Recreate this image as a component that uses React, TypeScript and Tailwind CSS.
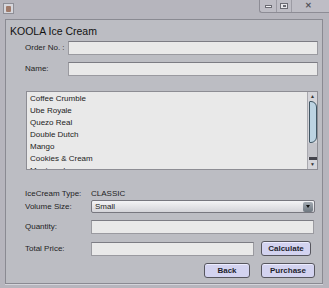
import React from 'react';

const flavors = [
  'Coffee Crumble',
  'Ube Royale',
  'Quezo Real',
  'Double Dutch',
  'Mango',
  'Cookies & Cream',
  'Mantecado',
];

const field = 'h-[14px] bg-[#e9e9e9] border border-[#9a9aa0] border-t-[#7c7c84]';
const btn =
  'h-[15px] rounded-[3px] border border-[#56565e] bg-[#d3d3f0] text-[8px] font-bold text-[#1e1e2e] flex items-center justify-center shadow-[inset_0_1px_0_#ececff]';

export default function App() {
  return (
    <div
      className="w-[329px] h-[288px] bg-[#b6b5bd] flex flex-col overflow-hidden"
      style={{ fontFamily: '"Liberation Sans", Arial, sans-serif' }}
    >
      {/* Title bar */}
      <div className="h-[19px] flex items-start justify-between shrink-0">
        <div className="ml-[3px] mt-[3px] w-[11px] h-[11px] border border-[#8e8e96] bg-[#d6d6dc] flex items-center justify-center">
          <div className="w-[5px] h-[6px] bg-[#a07a6a] rounded-[1px]" />
        </div>
        <div className="flex h-[13px] border-l border-b border-[#8d8c95] rounded-bl-[3px] bg-[#bebdc5]">
          <div className="w-[17px] flex items-center justify-center border-r border-[#9c9ba4]">
            <div className="w-[7px] h-[3px] bg-[#f2f2f4] border border-[#6a6a72]" />
          </div>
          <div className="w-[15px] flex items-center justify-center border-r border-[#9c9ba4]">
            <div className="w-[8px] h-[6px] border border-[#6a6a72] bg-[#e6e6ea] flex items-center justify-center">
              <div className="w-[3px] h-[2px] bg-[#6a6a72]" />
            </div>
          </div>
          <div className="w-[37px] pr-[4px] flex items-center justify-center text-[8px] font-bold text-[#55555c] leading-none">
            ✕
          </div>
        </div>
      </div>

      {/* Frame */}
      <div className="flex-1 pl-[5px] pr-[6px] pb-[4px] flex flex-col">
        <div className="flex-1 border border-[#8a8a92] bg-[#bcbdc3] flex flex-col text-[8px] text-[#1e1e24] relative shadow-[0_1px_0_#d4d4da]">
          <div className="pl-[4px] pt-[2px] text-[10.5px] text-[#111] leading-none h-[20px] flex items-center">
            KOOLA Ice Cream
          </div>

          <div className="flex items-center mt-[1px] pr-[4px]">
            <div className="w-[62px] pl-[19px] whitespace-nowrap">Order No. :</div>
            <div className={`${field} flex-1`} />
          </div>

          <div className="flex items-center mt-[7px] pr-[4px]">
            <div className="w-[62px] pl-[19px]">Name:</div>
            <div className={`${field} flex-1`} />
          </div>

          {/* List */}
          <div className="ml-[20px] mr-[4px] mt-[15px] h-[79px] bg-[#e9e9e9] border border-[#8d8d94] flex">
            <div className="flex-1 overflow-hidden pl-[3px] pt-[1px]">
              {flavors.map((f) => (
                <div key={f} className="h-[12px] leading-[12px] text-[8px] text-[#222]">
                  {f}
                </div>
              ))}
            </div>
            <div className="w-[10px] bg-[#d5d5da] border-l border-[#a8a8ae] flex flex-col items-center">
              <div className="h-[9px] text-[5px] leading-[9px] text-[#333]">▲</div>
              <div className="w-[8px] h-[42px] bg-[#bcd3e2] border border-[#3f5563] rounded-r-[6px] rounded-l-[1px]" />
              <div className="flex-1 w-full bg-[#c4c4ca]" />
              <div className="h-[3px] w-[8px] bg-[#44444c]" />
              <div className="h-[9px] text-[5px] leading-[9px] text-[#333]">▼</div>
            </div>
          </div>

          <div className="flex items-center mt-[18px] h-[12px]">
            <div className="w-[85px] pl-[19px]">IceCream Type:</div>
            <div>CLASSIC</div>
          </div>

          <div className="flex items-center mt-[0px] pr-[7px]">
            <div className="w-[85px] pl-[19px]">Volume Size:</div>
            <div className="flex-1 h-[13px] rounded-[2px] border border-[#77777f] bg-gradient-to-b from-[#f4f4f6] to-[#d4d4d9] flex items-center">
              <div className="flex-1 pl-[3px] text-[8px]">Small</div>
              <div className="w-[10px] h-[10px] mr-[1px] rounded-[2px] bg-gradient-to-b from-[#a3aab2] to-[#6f7881] flex items-center justify-center">
                <div className="w-0 h-0 border-l-[2.5px] border-r-[2.5px] border-t-[3px] border-l-transparent border-r-transparent border-t-[#111]" />
              </div>
            </div>
          </div>

          <div className="flex items-center mt-[7px] pr-[8px]">
            <div className="w-[85px] pl-[19px]">Quantity:</div>
            <div className={`${field} flex-1`} />
          </div>

          <div className="flex items-center mt-[7px] pr-[11px]">
            <div className="w-[85px] pl-[19px]">Total Price:</div>
            <div className={`${field} w-[163px]`} />
            <div className="flex-1" />
            <div className={`${btn} w-[50px]`}>Calculate</div>
          </div>

          <div className="flex justify-end mt-[7px] pr-[7px] gap-[11px]">
            <div className={`${btn} w-[46px]`}>Back</div>
            <div className={`${btn} w-[54px]`}>Purchase</div>
          </div>
        </div>
      </div>
    </div>
  );
}
